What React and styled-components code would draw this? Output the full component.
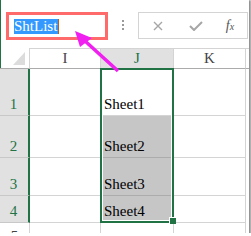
import React from "react";
import styled, { createGlobalStyle } from "styled-components";

const GREEN = "#217346";
const GRID = "#d4d4d4";

const Global = createGlobalStyle`
  html, body {
    margin: 0;
    padding: 0;
    background: #ffffff;
  }
  body {
    font-family: "Liberation Serif", "Times New Roman", serif;
  }
`;

const Sheet = styled.div`
  position: relative;
  width: 249px;
  height: 233px;
  overflow: hidden;
  background: #fff;
  box-shadow: 1px 1px 2px 1px rgba(0, 0, 0, 0.45);
`;

const TopBar = styled.div`
  display: flex;
  align-items: flex-start;
  height: 48px;
  padding: 12px 0 0 6px;
  box-sizing: border-box;
  box-shadow: inset 1px 0 0 ${GREEN};
`;

const NameBox = styled.div`
  display: flex;
  align-items: center;
  width: 102px;
  height: 28px;
  box-sizing: border-box;
  border: 3px solid #ff6b6b;
  padding-left: 5px;
`;

const Selected = styled.span`
  display: block;
  height: 15px;
  line-height: 15px;
  background: #3399ff;
  color: #fff;
  font-size: 15px;
  padding-right: 1px;
`;

const Caret = styled.span`
  display: block;
  width: 1px;
  height: 15px;
  background: #c55a11;
`;

const Dots = styled.div`
  display: flex;
  flex-direction: column;
  gap: 2px;
  margin: 8px 0 0 14px;

  i {
    display: block;
    width: 2px;
    height: 2px;
    background: #9a9a9a;
  }
`;

const FormulaBox = styled.div`
  display: grid;
  grid-template-columns: 38px 38px 30px;
  align-items: center;
  width: 110px;
  height: 27px;
  box-sizing: border-box;
  border: 1px solid ${GRID};
  margin-left: 14px;
`;

const Tool = styled.div`
  display: flex;
  justify-content: center;
  align-items: center;
  color: #a6a6a6;
`;

const Fx = styled.span`
  font-family: "Liberation Serif", serif;
  font-style: italic;
  font-size: 14px;
  color: #555;

  sub {
    font-size: 10px;
    vertical-align: baseline;
  }
`;

const Grid = styled.div`
  display: grid;
  grid-template-columns: 30px 71px 73px 72px 3px;
  grid-template-rows: 21px 47px 42px 38px 27px 25px;
  font-size: 15px;
  line-height: 15px;
`;

const Corner = styled.div`
  position: relative;
  box-sizing: border-box;
  border-right: 1px solid ${GRID};
  border-bottom: 1px solid #ababab;
  box-shadow: inset 1px 0 0 ${GREEN};

  &::after {
    content: "";
    position: absolute;
    right: 4px;
    bottom: 3px;
    width: 0;
    height: 0;
    border-left: 12px solid transparent;
    border-bottom: 13px solid #dcdcdc;
  }
`;

const ColHead = styled.div`
  display: flex;
  justify-content: center;
  align-items: flex-end;
  box-sizing: border-box;
  padding-bottom: 2px;
  border-top: 1px solid ${GRID};
  border-right: 1px solid ${GRID};
  border-bottom: 1px solid ${(p) => (p.$active ? GREEN : "#ababab")};
  background: ${(p) => (p.$active ? "#e1e1e1" : "#fff")};
  color: ${(p) => (p.$active ? GREEN : "#444")};
`;

const Filler = styled.div`
  box-sizing: border-box;
  border-top: ${(p) => (p.$top ? `1px solid ${GRID}` : "none")};
  border-bottom: ${(p) => (p.$top ? "1px solid #ababab" : "none")};
`;

const RowHead = styled.div`
  display: flex;
  justify-content: center;
  align-items: flex-end;
  box-sizing: border-box;
  padding-bottom: 3px;
  padding-right: ${(p) => (p.$active ? "1px" : "0")};
  background: ${(p) => (p.$active ? "#e1e1e1" : "#fff")};
  color: ${(p) => (p.$active ? GREEN : "#444")};
  border-bottom: 1px solid ${(p) => (p.$active ? "#c8c8c8" : GRID)};
  border-right: ${(p) => (p.$active ? `2px solid ${GREEN}` : `1px solid ${GRID}`)};
`;

const Cell = styled.div`
  display: flex;
  align-items: flex-end;
  box-sizing: border-box;
  padding: 0 0 3px 3px;
  color: #000;
  background: ${(p) => (p.$shade ? "#c6c6c6" : "#fff")};
  border-right: 1px solid ${GRID};
  border-bottom: 1px solid ${(p) => (p.$shade ? "#acacac" : GRID)};
`;

const Selection = styled.div`
  position: absolute;
  left: 100px;
  top: 68px;
  width: 74px;
  height: 155px;
  box-sizing: border-box;
  border: 2px solid ${GREEN};
  box-shadow: inset 0 0 0 1px #fff;
  pointer-events: none;
`;

const Handle = styled.div`
  position: absolute;
  left: 170px;
  top: 218px;
  width: 6px;
  height: 6px;
  background: ${GREEN};
  box-shadow: -1px -1px 0 0 #fff;
`;

const Overlay = styled.svg`
  position: absolute;
  left: 0;
  top: 0;
  pointer-events: none;
`;

const rows = [
  { n: 1, text: "Sheet1", shade: false },
  { n: 2, text: "Sheet2", shade: true },
  { n: 3, text: "Sheet3", shade: true },
  { n: 4, text: "Sheet4", shade: true },
];

export default function App() {
  return (
    <>
      <Global />
      <Sheet>
        <TopBar>
          <NameBox>
            <Selected>ShtList</Selected>
            <Caret />
          </NameBox>
          <Dots>
            <i />
            <i />
            <i />
          </Dots>
          <FormulaBox>
            <Tool>
              <svg width="10" height="10" viewBox="0 0 10 10">
                <path d="M1 1 L9 9 M9 1 L1 9" stroke="currentColor" strokeWidth="1.4" fill="none" />
              </svg>
            </Tool>
            <Tool>
              <svg width="14" height="10" viewBox="0 0 14 10">
                <path d="M1 5 L5 9 L13 1" stroke="currentColor" strokeWidth="2" fill="none" />
              </svg>
            </Tool>
            <Tool>
              <Fx>
                f<sub>x</sub>
              </Fx>
            </Tool>
          </FormulaBox>
        </TopBar>

        <Grid>
          <Corner />
          <ColHead>I</ColHead>
          <ColHead $active>J</ColHead>
          <ColHead>K</ColHead>
          <Filler $top />

          {rows.map((r) => (
            <React.Fragment key={r.n}>
              <RowHead $active>{r.n}</RowHead>
              <Cell />
              <Cell $shade={r.shade}>{r.text}</Cell>
              <Cell />
              <Filler />
            </React.Fragment>
          ))}

          <RowHead>5</RowHead>
          <Cell />
          <Cell />
          <Cell />
          <Filler />
        </Grid>

        <Selection />
        <Handle />

        <Overlay width="249" height="233" viewBox="0 0 249 233">
          <polygon points="75,31 80,47 92,38" fill="#f020f0" />
          <line x1="85" y1="41" x2="118" y2="71" stroke="#f020f0" strokeWidth="3.5" />
        </Overlay>
      </Sheet>
    </>
  );
}
